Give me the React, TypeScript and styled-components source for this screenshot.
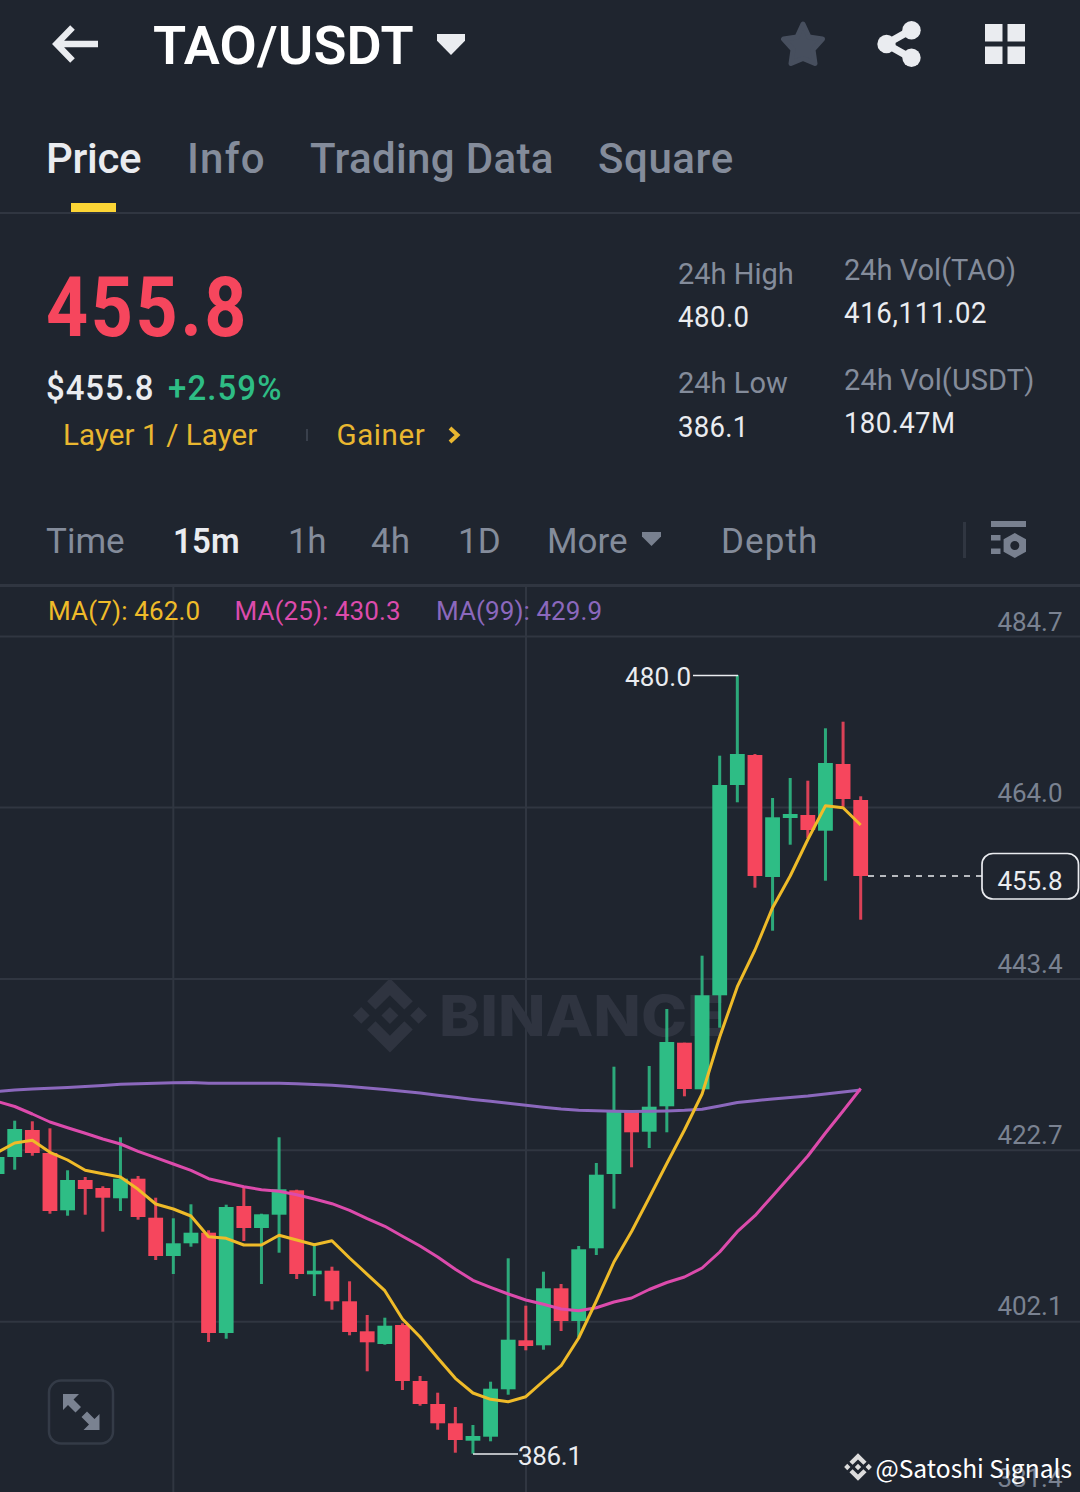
import React from "react";
import styled, { createGlobalStyle } from "styled-components";

const color = {
  bg: "#1f252f",
  line: "#303641",
  muted: "#848c9b",
  text: "#eaecf0",
  yellow: "#fcd535",
  gold: "#e9b730",
  up: "#2ebd85",
  down: "#f6465d",
  ma7: "#efbb29",
  ma25: "#dc4bac",
  ma99: "#8b68bd",
};

const GlobalStyle = createGlobalStyle`
  body { margin: 0; background: ${color.bg}; }
  * { box-sizing: border-box; }
`;

const Screen = styled.main`
  display: flex;
  flex-direction: column;
  width: 1080px;
  height: 1492px;
  overflow: hidden;
  background: ${color.bg};
  color: ${color.text};
  font-family: Roboto, "Liberation Sans", sans-serif;
`;

const Label = styled.span<{ $size: number; $weight?: number; $tone?: string; $spacing?: number; $narrow?: number }>`
  display: block;
  white-space: nowrap;
  font-size: ${(p) => p.$size}px;
  font-weight: ${(p) => p.$weight ?? 400};
  color: ${(p) => p.$tone ?? color.text};
  letter-spacing: ${(p) => p.$spacing ?? 0}px;
  ${(p) => p.$narrow && `transform: scaleX(${p.$narrow}); transform-origin: left;`}
`;

const Header = styled.header`
  display: flex;
  align-items: center;
  height: 88px;
  padding: 0 55px 0 52px;
`;

const Pair = styled.div`
  display: flex;
  align-items: center;
  gap: 23px;
  margin-left: 54px;
  line-height: 64px;

  span { padding-top: 3px; }
`;

const Actions = styled.div`
  display: flex;
  align-items: center;
  margin-left: auto;
  gap: 51px;
`;

const ShareSlot = styled.div`
  display: flex;
  margin-right: 13px;
`;

const Tabs = styled.nav`
  display: grid;
  grid-template-columns: 96px 78px 243px 136px;
  column-gap: 45px;
  height: 126px;
  padding: 47px 0 0 46px;
  border-bottom: 2px solid ${color.line};
  line-height: 48px;
`;

const Tab = styled.div`
  display: flex;
  flex-direction: column;
  justify-content: space-between;
`;

const Underline = styled.i`
  width: 45px;
  height: 9px;
  margin-left: 25px;
  background: ${color.yellow};
`;

const Summary = styled.section`
  display: flex;
  height: 284px;
`;

const PriceColumn = styled.div`
  display: flex;
  flex-direction: column;
  width: 678px;
  padding: 49px 0 0 46px;
`;

const LastPrice = styled.div`
  line-height: 90px;
`;

const ChangeRow = styled.div`
  display: grid;
  grid-template-columns: 122px auto;
  margin-top: 14px;
  line-height: 44px;
`;

const TagRow = styled.div`
  display: flex;
  align-items: center;
  margin-top: 4px;
  padding-left: 17px;
  line-height: 40px;
`;

const TagDivider = styled.i`
  width: 2px;
  height: 12px;
  margin: 0 28px 0 49px;
  background: #39404c;
`;

const ChevronSlot = styled.div`
  display: flex;
  margin-left: 23px;
`;

const Stats = styled.div<{ $top: number; $width: number }>`
  display: flex;
  flex-direction: column;
  gap: 23px;
  width: ${(p) => p.$width}px;
  padding-top: ${(p) => p.$top}px;
  line-height: 43.4px;
`;

const Intervals = styled.nav`
  display: grid;
  grid-template-columns: 127px 115px 83px 87px 89px 174px 242px auto;
  align-items: center;
  height: 89px;
  padding: 0 0 3px 46px;
  border-bottom: 3px solid ${color.line};
  line-height: 44px;

  span { padding-top: 5px; }
`;

const More = styled.div`
  display: flex;
  align-items: center;
  gap: 14px;
  svg { margin-top: -2px; }
`;

const ChartTools = styled.div`
  display: flex;
  align-items: center;
  gap: 25px;
`;

const ToolDivider = styled.i`
  width: 3px;
  height: 36px;
  background: ${color.line};
`;

const ChartPanel = styled.section`
  position: relative;
  flex: 1;
  svg { display: block; }
`;

const Author = styled.div`
  position: absolute;
  right: 8px;
  bottom: 7px;
  display: flex;
  align-items: center;
  gap: 3px;
  line-height: 36px;
  font-family: "Noto Sans CJK SC", "Noto Sans", sans-serif;
`;

const BackIcon = () => (
  <svg width="47" height="38" viewBox="0 0 47 38">
    <path d="M20.500 2.500 4.500 19l16 16.500M4 19h42" fill="none" stroke={color.text} strokeWidth="6.400" />
  </svg>
);

const Caret = ({ width, height, fill }: { width: number; height: number; fill: string }) => (
  <svg width={width} height={height} viewBox="0 0 28 22" preserveAspectRatio="none">
    <path d="M0 0h28v7L14 22 0 7z" fill={fill} />
  </svg>
);

const StarIcon = () => (
  <svg width="46" height="48" viewBox="0 0 46 48">
    <path
      d="M23 4l6 13 13.500 2-9.500 10.500 2 14L23 38.500 11 43.500l2-14L3.500 19 17 17z"
      fill="#474f5e"
      stroke="#474f5e"
      strokeWidth="5"
      strokeLinejoin="round"
    />
  </svg>
);

const ShareIcon = () => (
  <svg width="44" height="46" viewBox="0 0 44 46">
    <path d="M34 9 9 23l25 14" fill="none" stroke={color.text} strokeWidth="7.200" />
    <circle cx="9.500" cy="23" r="9.200" fill={color.text} />
    <circle cx="34.500" cy="9.200" r="9.200" fill={color.text} />
    <circle cx="34.500" cy="36.800" r="9.200" fill={color.text} />
  </svg>
);

const GridIcon = () => (
  <svg width="40" height="40" viewBox="0 0 40 40" fill={color.text}>
    <path d="M0 0h17.500v17.500H0zM22.500 0H40v17.500H22.500zM0 22.500h17.500V40H0zM22.500 22.500H40V40H22.500z" />
  </svg>
);

const Chevron = () => (
  <svg width="13" height="18" viewBox="0 0 13 18">
    <path d="M2 2l7.500 7L2 16" fill="none" stroke={color.gold} strokeWidth="4" />
  </svg>
);

const SettingsIcon = () => (
  <svg width="35" height="37" viewBox="0 0 35 37" fill="#78808f">
    <path d="M0 0h35v6H0zM0 14h9.500v5.500H0zM0 27.500h9.500V33H0z" />
    <path fillRule="evenodd" d="M23.800 12 35 18.200v12.600L23.800 37l-11.200-6.200V18.200zm0 8a4.500 4.500 0 1 0 0 9 4.500 4.500 0 0 0 0-9z" />
  </svg>
);

/* Binance mark on a 126-unit square */
const markPath =
  "M38.7 53.2 63 28.900l24.300 24.300 14.200-14.100L63 .6 24.600 39zM.6 63l14.100-14.100L28.800 63 14.700 77.100zM38.700 72.800 63 97.100l24.300-24.300 14.200 14.100L63 125.400 24.600 87zM97.200 63l14.100-14.100L125.400 63l-14.100 14.100zM77.300 63 63 48.700 48.700 63 63 77.300z";

const FIRST_X = 14.7;
const STEP = 17.625;
const xAt = (i: number) => FIRST_X + STEP * i;

/* direction, wick top, body top, body bottom, wick bottom; the first one is cut by the left edge */
type Candle = ["u" | "d", number, number, number, number];
const candles: Candle[] = [
  ["u", 1157, 1157, 1174, 1174],
  ["u", 1120.7, 1129, 1157, 1169.7],
  ["d", 1121.3, 1130, 1153, 1155.7],
  ["d", 1128.3, 1153, 1211, 1213.7],
  ["u", 1170.3, 1180, 1210.3, 1215.7],
  ["d", 1177, 1180, 1189, 1214.7],
  ["d", 1186.3, 1188, 1197.7, 1231.7],
  ["u", 1137.3, 1178.7, 1198.3, 1211],
  ["d", 1176, 1178.7, 1217, 1219.7],
  ["d", 1197.7, 1217.7, 1256, 1260],
  ["u", 1218.3, 1243.3, 1256, 1274],
  ["u", 1204.3, 1232.7, 1243.3, 1246.7],
  ["d", 1230.3, 1232.7, 1333, 1342],
  ["u", 1204.7, 1207, 1333, 1338.7],
  ["d", 1187.3, 1206, 1228, 1241],
  ["u", 1213.7, 1214.3, 1228, 1284],
  ["u", 1137.3, 1189.3, 1214.7, 1252.7],
  ["d", 1189.7, 1190.3, 1274, 1279],
  ["u", 1243.3, 1270.7, 1274.3, 1296],
  ["d", 1266.7, 1270.7, 1301.3, 1309.7],
  ["d", 1281.3, 1301.3, 1332, 1335.3],
  ["d", 1315, 1331.3, 1342.3, 1371.3],
  ["u", 1317.7, 1325.7, 1344, 1344.7],
  ["d", 1323.3, 1325, 1381, 1390],
  ["d", 1376, 1381, 1404, 1405.7],
  ["d", 1392.7, 1404, 1423.3, 1429.7],
  ["d", 1407, 1423.3, 1440, 1452.7],
  ["u", 1425, 1436, 1440.7, 1453.7],
  ["u", 1381.7, 1388.7, 1436.7, 1441.3],
  ["u", 1258.3, 1339.7, 1389.3, 1394.7],
  ["d", 1305.7, 1340.3, 1346, 1350.3],
  ["u", 1271.7, 1288.3, 1345.3, 1349.7],
  ["d", 1284, 1288.3, 1321, 1331],
  ["u", 1246, 1249.3, 1321, 1337.7],
  ["u", 1163, 1174.7, 1248.3, 1255],
  ["u", 1066.7, 1111.5, 1174, 1208.7],
  ["d", 1112, 1112, 1132.3, 1167.3],
  ["u", 1066, 1106.7, 1131.7, 1148],
  ["u", 1009, 1042, 1106.3, 1132.3],
  ["d", 1042.7, 1042.7, 1089, 1096.3],
  ["u", 955.7, 995.3, 1089.3, 1089.3],
  ["u", 755.7, 785, 995.3, 1027.7],
  ["u", 675, 754, 785, 802.3],
  ["d", 754, 755, 876, 887.7],
  ["u", 798, 817.3, 877, 930.7],
  ["u", 778, 814, 818, 844.7],
  ["d", 780.7, 815, 830, 838],
  ["u", 728.3, 763, 830.7, 880.7],
  ["d", 721.7, 764, 799, 806.7],
  ["d", 796.3, 800, 876, 919.7],
];

const ma7 = [
  1143, 1140.3, 1152.3, 1160, 1170.3, 1173.7, 1177, 1189.3, 1204, 1209, 1216, 1236.7, 1238.3, 1245, 1245, 1235.3,
  1240, 1244.7, 1240.7, 1258, 1274.3, 1290.7, 1319, 1337, 1358, 1378.3, 1393, 1399.3, 1401.7, 1396.7, 1381, 1365.7,
  1338, 1301, 1262, 1231.5, 1197.7, 1163.5, 1130, 1094, 1037, 986.7, 950, 907.7, 876, 839.5, 805.7, 807.7, 825,
];
const ma25 = [
  1106.5, 1114, 1122, 1127.7, 1133.3, 1139, 1144, 1151.3, 1157.7, 1164, 1170.3, 1178.7, 1182.7, 1186.7, 1189.7,
  1191.3, 1194.7, 1199, 1203.7, 1210.3, 1218.7, 1226.3, 1236.3, 1246, 1257, 1269.3, 1280.3, 1287.3, 1294, 1300,
  1304.3, 1309, 1310.7, 1307.7, 1302, 1298, 1289.5, 1282.5, 1277, 1268, 1252, 1231.7, 1215.7, 1196, 1176, 1156, 1133,
  1111, 1088.5,
];
const ma99 = [
  1090, 1089, 1088.3, 1087.5, 1086.5, 1085.5, 1084.3, 1083.7, 1083.2, 1082.8, 1082.6, 1083.3, 1083.3, 1083.3, 1083.3,
  1083.3, 1083.7, 1084.5, 1085.3, 1086.6, 1088, 1089.5, 1091.2, 1093, 1095.2, 1097.3, 1099.4, 1101.3, 1103.3, 1105.3,
  1107.2, 1109, 1110.3, 1110.8, 1111.2, 1111.4, 1111.2, 1110.9, 1110.3, 1109.3, 1106, 1102.5, 1100.7, 1099, 1097.5,
  1096, 1094, 1092, 1090,
];
const toPoints = (start: number, values: number[]) =>
  [`-1,${start}`, ...values.map((y, i) => `${xAt(i)},${y}`)].join(" ");

const gridY = [636.5, 807.5, 979, 1150.3, 1321.7];
const axis = ["484.7", "464.0", "443.4", "422.7", "402.1", "381.4"];
const legend = [
  { x: 48, w: 152, text: "MA(7): 462.0", fill: color.ma7 },
  { x: 234.5, w: 166, text: "MA(25): 430.3", fill: color.ma25 },
  { x: 436, w: 166, text: "MA(99): 429.9", fill: color.ma99 },
];

const Chart = () => (
  <svg width="1080" height="905" viewBox="0 587 1080 905" fontFamily="Roboto, sans-serif" fontSize="26">
    <g stroke={color.line} strokeWidth="2">
      {gridY.map((y) => (
        <path key={y} d={`M0 ${y}H1080`} />
      ))}
      <path d="M173.300 587V1492M526 587V1492" />
    </g>
    <g fill="#2f3440">
      <path d={markPath} transform="translate(352.500 978) scale(.594)" />
      <text
        x="439"
        y="1036"
        fontFamily="Inter, sans-serif"
        fontSize="56.500"
        fontWeight="800"
        textLength="286"
        lengthAdjust="spacingAndGlyphs"
      >
        BINANCE
      </text>
    </g>
    {candles.map(([dir, high, top, bottom, low], i) => {
      const x = xAt(i - 1);
      return (
        <g key={i} fill={dir === "u" ? color.up : color.down}>
          <rect x={x - 1.5} y={high} width="3" height={low - high} opacity=".87" />
          <rect x={x - 7.4} y={top} width="14.800" height={bottom - top} />
        </g>
      );
    })}
    <g fill="none" strokeWidth="3" strokeLinejoin="round">
      <polyline points={toPoints(1091.3, ma99)} stroke={color.ma99} />
      <polyline points={toPoints(1102, ma25)} stroke={color.ma25} />
      <polyline points={toPoints(1151.5, ma7)} stroke={color.ma7} />
    </g>
    {legend.map((l) => (
      <text key={l.text} x={l.x} y="620" fill={l.fill} textLength={l.w}>
        {l.text}
      </text>
    ))}
    {axis.map((t, i) => (
      <text key={t} x="997.500" y={631 + i * 171.1} fill="#7a8291" textLength="65">
        {t}
      </text>
    ))}
    <g stroke={color.text} strokeWidth="1.700" fill="none">
      <path d="M693 675.500H738M473 1454H518" />
      <path d="M868 876H982" strokeDasharray="6 6" />
      <rect x="982" y="853.500" width="96.500" height="45.500" rx="11" fill={color.bg} />
    </g>
    <g fill={color.text}>
      <text x="625" y="686" textLength="66">480.0</text>
      <text x="518" y="1465" textLength="64">386.1</text>
      <text x="997.500" y="890" textLength="65">455.8</text>
    </g>
    <rect x="49" y="1380.500" width="64" height="63" rx="12" fill="none" stroke="#343b47" strokeWidth="2.500" />
    <path
      d="M63 1394h16l-5.500 5.500 7.500 7.500-5.500 5.500-7.500-7.500-5 5zM99.500 1430h-16l5.500-5.500-7.500-7.500 5.500-5.500 7.500 7.500 5-5z"
      fill="#7a8291"
    />
  </svg>
);

export default function App() {
  return (
    <Screen>
      <GlobalStyle />
      <Header>
        <BackIcon />
        <Pair>
          <Label $size={54} $weight={600} $tone="#ffffff" $spacing={0.2}>TAO/USDT</Label>
          <Caret width={28} height={21} fill={color.text} />
        </Pair>
        <Actions>
          <StarIcon />
          <ShareSlot>
            <ShareIcon />
          </ShareSlot>
          <GridIcon />
        </Actions>
      </Header>
      <Tabs>
        <Tab>
          <Label $size={42} $weight={500} $spacing={-0.3}>Price</Label>
          <Underline />
        </Tab>
        <Label $size={42} $weight={500} $tone={color.muted} $spacing={1.2}>Info</Label>
        <Label $size={42} $weight={500} $tone={color.muted} $spacing={0.35}>Trading Data</Label>
        <Label $size={42} $weight={500} $tone={color.muted} $spacing={0.6}>Square</Label>
      </Tabs>
      <Summary>
        <PriceColumn>
          <LastPrice>
            <Label $size={83.5} $weight={700} $tone={color.down} $spacing={3} $narrow={0.88}>455.8</Label>
          </LastPrice>
          <ChangeRow>
            <Label $size={35} $weight={500} $spacing={1} $narrow={0.94}>$455.8</Label>
            <Label $size={35} $weight={500} $tone={color.up} $spacing={1.2} $narrow={0.94}>+2.59%</Label>
          </ChangeRow>
          <TagRow>
            <Label $size={29.5} $tone={color.gold} $spacing={0.1}>Layer 1 / Layer</Label>
            <TagDivider />
            <Label $size={29.5} $tone={color.gold} $spacing={0.6}>Gainer</Label>
            <ChevronSlot>
              <Chevron />
            </ChevronSlot>
          </TagRow>
        </PriceColumn>
        <Stats $top={38.5} $width={166}>
          <div>
            <Label $size={29} $tone={color.muted}>24h High</Label>
            <Label $size={29} $spacing={0.5} $narrow={0.95}>480.0</Label>
          </div>
          <div>
            <Label $size={29} $tone={color.muted}>24h Low</Label>
            <Label $size={29} $spacing={0.3} $narrow={0.95}>386.1</Label>
          </div>
        </Stats>
        <Stats $top={35} $width={230}>
          <div>
            <Label $size={29} $tone={color.muted}>24h Vol(TAO)</Label>
            <Label $size={29} $spacing={0.7} $narrow={0.95}>416,111.02</Label>
          </div>
          <div>
            <Label $size={29} $tone={color.muted} $spacing={0.1}>24h Vol(USDT)</Label>
            <Label $size={29} $spacing={0.4} $narrow={0.95}>180.47M</Label>
          </div>
        </Stats>
      </Summary>
      <Intervals>
        <Label $size={35} $tone={color.muted}>Time</Label>
        <Label $size={35} $weight={600} $spacing={0.2} $narrow={0.94}>15m</Label>
        <Label $size={35} $tone={color.muted} $spacing={-0.5}>1h</Label>
        <Label $size={35} $tone={color.muted}>4h</Label>
        <Label $size={35} $tone={color.muted}>1D</Label>
        <More>
          <Label $size={35} $tone={color.muted}>More</Label>
          <Caret width={19} height={14} fill="#78808f" />
        </More>
        <Label $size={35} $tone={color.muted} $spacing={1.1}>Depth</Label>
        <ChartTools>
          <ToolDivider />
          <SettingsIcon />
        </ChartTools>
      </Intervals>
      <ChartPanel>
        <Chart />
        <Author>
          <svg width="28" height="28" viewBox="0 0 126 126">
            <path d={markPath} fill="#dcdcdc" />
          </svg>
          <Label $size={24.6} $tone="#ffffff">@Satoshi Signals</Label>
        </Author>
      </ChartPanel>
    </Screen>
  );
}
